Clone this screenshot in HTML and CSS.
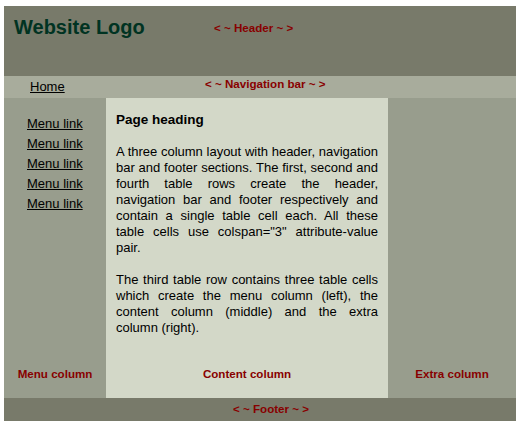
FILE: index.html
```html
<!DOCTYPE html>
<html>
<head>
<meta charset="utf-8">
<title>Three column layout</title>
<link rel="stylesheet" href="styles.css">
</head>
<body>
<div class="page">
  <div class="header">
    <div class="logo">Website Logo</div>
    <div class="label header-label">&lt; ~ Header ~ &gt;</div>
  </div>
  <div class="nav">
    <a class="home" href="#">Home</a>
    <div class="label nav-label">&lt; ~ Navigation bar ~ &gt;</div>
  </div>
  <div class="main">
    <div class="col menu">
      <ul class="menu-list">
        <li><a href="#">Menu link</a></li>
        <li><a href="#">Menu link</a></li>
        <li><a href="#">Menu link</a></li>
        <li><a href="#">Menu link</a></li>
        <li><a href="#">Menu link</a></li>
      </ul>
      <div class="label col-label">Menu column</div>
    </div>
    <div class="col content">
      <h1 class="heading">Page heading</h1>
      <p class="text">A three column layout with header, navigation bar and footer sections. The first, second and fourth table rows create the header, navigation bar and footer respectively and contain a single table cell each. All these table cells use colspan="3" attribute-value pair.</p>
      <p class="text">The third table row contains three table cells which create the menu column (left), the content column (middle) and the extra column (right).</p>
      <div class="label col-label">Content column</div>
    </div>
    <div class="col extra">
      <div class="label col-label">Extra column</div>
    </div>
  </div>
  <div class="footer">
    <div class="label footer-label">&lt; ~ Footer ~ &gt;</div>
  </div>
</div>
</body>
</html>
```

FILE: styles.css
```css
html, body {
  background: #ffffff;
}
body {
  margin: 6px 4px;
  font-family: "Liberation Sans", Arial, sans-serif;
  font-size: 13px;
  color: #000000;
}
.page {
  width: 512px;
}
.label {
  font-weight: bold;
  font-size: 11.6px;
  line-height: 14px;
  color: #880000;
}
.header {
  height: 70px;
  box-sizing: border-box;
  background: #787a6a;
  display: flex;
  align-items: flex-start;
  padding: 10px 0 0 10px;
}
.logo {
  width: 200px;
  font-size: 20px;
  font-weight: bold;
  line-height: 23px;
  color: #003322;
}
.header-label {
  line-height: 23px;
}
.nav {
  height: 22px;
  box-sizing: border-box;
  background: #a8ac9c;
  display: flex;
  align-items: flex-start;
  padding-left: 26px;
}
.home {
  width: 175px;
  padding-top: 3px;
  line-height: 15px;
  color: #000000;
  text-decoration: underline;
}
.nav-label {
  padding-top: 1px;
}
.main {
  display: flex;
  height: 300px;
}
.col {
  display: flex;
  flex-direction: column;
  box-sizing: border-box;
  padding-bottom: 17px;
}
.col-label {
  margin-top: auto;
  text-align: center;
}
.menu {
  width: 102px;
  background: #989d8d;
  padding-top: 15.5px;
}
.menu-list {
  list-style: none;
  margin: 0;
  padding: 0 0 0 23px;
}
.menu-list li {
  line-height: 20px;
}
.menu-list a {
  color: #000000;
  text-decoration: underline;
}
.content {
  width: 282px;
  background: #d3d8c8;
  padding-top: 14px;
  padding-left: 10px;
  padding-right: 10px;
}
.heading {
  margin: 0 0 16px;
  font-size: 13.5px;
  font-weight: bold;
  line-height: 16px;
}
.text {
  margin: 0 0 16px;
  line-height: 16px;
  text-align: justify;
}
.extra {
  width: 128px;
  background: #989d8d;
}
.footer {
  height: 23px;
  box-sizing: border-box;
  background: #787a6a;
  padding: 4px 0 0 229px;
}
```
